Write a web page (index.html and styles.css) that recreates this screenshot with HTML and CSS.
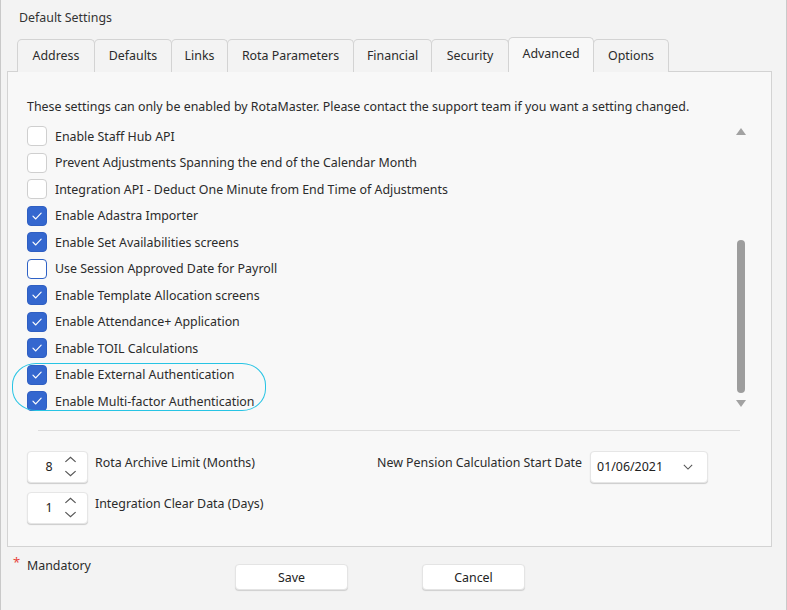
FILE: index.html
```html
<!DOCTYPE html>
<html>
<head>
<meta charset="utf-8">
<link rel="stylesheet" href="styles.css">
</head>
<body>
<div class="window">
  <div class="title">Default Settings</div>
  <div class="tabs">
    <div class="tab t-address">Address</div>
    <div class="tab t-defaults">Defaults</div>
    <div class="tab t-links">Links</div>
    <div class="tab t-rota">Rota Parameters</div>
    <div class="tab t-fin">Financial</div>
    <div class="tab t-sec">Security</div>
    <div class="tab active t-adv">Advanced</div>
    <div class="tab t-opt">Options</div>
  </div>
  <div class="panel">
    <div class="notice">These settings can only be enabled by RotaMaster. Please contact the support team if you want a setting changed.</div>
    <div class="list">
      <div class="items">
        <div class="row"><span class="cb"></span><span>Enable Staff Hub API</span></div>
        <div class="row"><span class="cb"></span><span>Prevent Adjustments Spanning the end of the Calendar Month</span></div>
        <div class="row"><span class="cb"></span><span>Integration API - Deduct One Minute from End Time of Adjustments</span></div>
        <div class="row"><span class="cb on"><svg viewBox="0 0 20 20"><path d="M5.5 10.2 L8.6 13.3 L14.6 6.8"/></svg></span><span>Enable Adastra Importer</span></div>
        <div class="row"><span class="cb on"><svg viewBox="0 0 20 20"><path d="M5.5 10.2 L8.6 13.3 L14.6 6.8"/></svg></span><span>Enable Set Availabilities screens</span></div>
        <div class="row"><span class="cb focus"></span><span>Use Session Approved Date for Payroll</span></div>
        <div class="row"><span class="cb on"><svg viewBox="0 0 20 20"><path d="M5.5 10.2 L8.6 13.3 L14.6 6.8"/></svg></span><span>Enable Template Allocation screens</span></div>
        <div class="row"><span class="cb on"><svg viewBox="0 0 20 20"><path d="M5.5 10.2 L8.6 13.3 L14.6 6.8"/></svg></span><span>Enable Attendance+ Application</span></div>
        <div class="row"><span class="cb on"><svg viewBox="0 0 20 20"><path d="M5.5 10.2 L8.6 13.3 L14.6 6.8"/></svg></span><span>Enable TOIL Calculations</span></div>
        <div class="row"><span class="cb on"><svg viewBox="0 0 20 20"><path d="M5.5 10.2 L8.6 13.3 L14.6 6.8"/></svg></span><span>Enable External Authentication</span></div>
        <div class="row"><span class="cb on"><svg viewBox="0 0 20 20"><path d="M5.5 10.2 L8.6 13.3 L14.6 6.8"/></svg></span><span>Enable Multi-factor Authentication</span></div>
      </div>
      <div class="scrollbar">
        <span class="arrow-up"></span>
        <span class="thumb"></span>
        <span class="arrow-down"></span>
      </div>
    </div>
    <div class="highlight"></div>
    <div class="sep"></div>
    <div class="bottom">
      <div class="left-col">
        <div class="spin-row">
          <div class="spin"><span class="val">8</span><svg class="chev" viewBox="0 0 14 22"><path d="M1.5 6 L7 1 L12.5 6"/><path d="M1.5 16 L7 21 L12.5 16"/></svg></div>
          <span class="spin-label">Rota Archive Limit (Months)</span>
        </div>
        <div class="spin-row">
          <div class="spin"><span class="val">1</span><svg class="chev" viewBox="0 0 14 22"><path d="M1.5 6 L7 1 L12.5 6"/><path d="M1.5 16 L7 21 L12.5 16"/></svg></div>
          <span class="spin-label">Integration Clear Data (Days)</span>
        </div>
      </div>
      <div class="right-col">
        <span class="spin-label">New Pension Calculation Start Date</span>
        <div class="combo"><span>01/06/2021</span><svg class="dchev" viewBox="0 0 12 7"><path d="M1 1 L6 6 L11 1"/></svg></div>
      </div>
    </div>
  </div>
  <div class="footer">
    <div class="mandatory"><span class="star">*</span><span class="mand-text">Mandatory</span></div>
    <button class="btn btn-save">Save</button>
    <button class="btn btn-cancel">Cancel</button>
  </div>
</div>
</body>
</html>
```

FILE: styles.css
```css
html, body {
  margin: 0;
  padding: 0;
  background: #f3f3f3;
}
body {
  font-family: "Noto Sans", "Open Sans", sans-serif;
  font-size: 12.4px;
  color: #2b2b2b;
}
.window {
  width: 787px;
  height: 610px;
  box-sizing: border-box;
  border-left: 1px solid #c9c9c9;
  border-right: 1px solid #c9c9c9;
  overflow: hidden;
}
.title {
  padding: 9px 0 0 18px;
  line-height: 17px;
  height: 17px;
  color: #333;
}
.tabs {
  display: flex;
  align-items: flex-end;
  height: 35px;
  margin: 11px 0 -1px 16px;
  position: relative;
  z-index: 2;
}
.tab {
  height: 33px;
  box-sizing: border-box;
  border: 1px solid #d3d3d3;
  border-bottom: none;
  border-radius: 5px 5px 0 0;
  margin-right: -1px;
  background: #f3f3f3;
  display: flex;
  align-items: center;
  justify-content: center;
  padding-bottom: 2px;
  color: #2b2b2b;
}
.tab.active {
  height: 35px;
  background: #f8f8f8;
  padding-bottom: 4px;
}
.t-address { width: 78px; }
.t-defaults { width: 78px; }
.t-links { width: 57px; }
.t-rota { width: 127px; }
.t-fin { width: 79px; }
.t-sec { width: 78px; }
.t-adv { width: 86px; }
.t-opt { width: 76px; }

.panel {
  position: relative;
  margin-left: 6px;
  width: 765px;
  height: 476px;
  box-sizing: border-box;
  border: 1px solid #d3d3d3;
  background: #f8f8f8;
  padding-left: 19px;
}
.notice {
  margin-top: 27px;
  line-height: 16px;
  white-space: nowrap;
}
.list {
  margin-top: 8px;
  display: flex;
  height: 291.5px;
}
.items {
  width: 709px;
}
.row {
  height: 26.5px;
  display: flex;
  align-items: center;
  gap: 8px;
  white-space: nowrap;
}
.cb {
  width: 20px;
  height: 20px;
  box-sizing: border-box;
  border: 1px solid #cfcfcf;
  border-radius: 4px;
  background: #fff;
  flex: none;
  display: block;
}
.cb.focus {
  border: 1.5px solid #2f62c6;
}
.cb.on {
  background: #3467cf;
  border-color: #2f5fc2;
}
.cb svg {
  width: 18px;
  height: 18px;
  display: block;
  fill: none;
  stroke: #fff;
  stroke-width: 1.3;
  stroke-linecap: round;
  stroke-linejoin: round;
}
.scrollbar {
  width: 10px;
  display: flex;
  flex-direction: column;
  align-items: center;
}
.arrow-up {
  margin-top: 5px;
  width: 0;
  height: 0;
  border-left: 5px solid transparent;
  border-right: 5px solid transparent;
  border-bottom: 7px solid #a2a2a2;
}
.thumb {
  margin-top: 105px;
  width: 8px;
  height: 153px;
  border-radius: 4px;
  background: #9d9d9d;
}
.arrow-down {
  margin-top: 7px;
  width: 0;
  height: 0;
  border-left: 5px solid transparent;
  border-right: 5px solid transparent;
  border-top: 7px solid #a2a2a2;
}
.highlight {
  position: absolute;
  left: 4px;
  top: 291px;
  width: 254px;
  height: 48px;
  box-sizing: border-box;
  border: 1.5px solid #27c4e4;
  border-radius: 24px / 22px;
  pointer-events: none;
}
.sep {
  margin: 15px 0 0 11px;
  width: 702px;
  height: 1px;
  background: #dedede;
}
.bottom {
  margin-top: 20px;
  display: flex;
}
.left-col {
  width: 350px;
  display: flex;
  flex-direction: column;
  gap: 9px;
}
.spin-row {
  display: flex;
  align-items: flex-start;
  gap: 7px;
}
.spin {
  width: 61px;
  height: 32px;
  box-sizing: border-box;
  background: #fff;
  border-radius: 4px;
  border: 1px solid #e6e6e6;
  box-shadow: 0 1px 1px rgba(0,0,0,0.18);
  display: flex;
  align-items: center;
  padding-left: 16px;
}
.val {
  width: 10px;
  text-align: center;
  color: #222;
}
.chev {
  margin-left: 10px;
  width: 13px;
  height: 21px;
  fill: none;
  stroke: #555;
  stroke-width: 1.3;
}
.spin-label {
  padding-top: 4px;
  line-height: 16px;
  white-space: nowrap;
}
.right-col {
  display: flex;
  align-items: flex-start;
  gap: 8px;
}
.combo {
  width: 118px;
  height: 32px;
  box-sizing: border-box;
  background: #fff;
  border-radius: 4px;
  border: 1px solid #e6e6e6;
  box-shadow: 0 1px 1px rgba(0,0,0,0.18);
  display: flex;
  align-items: center;
  padding-left: 6px;
  color: #222;
}
.dchev {
  margin-left: 20px;
  width: 10px;
  height: 6px;
  fill: none;
  stroke: #555;
  stroke-width: 1.3;
}
.footer {
  display: flex;
  align-items: flex-start;
  padding-top: 9px;
}
.mandatory {
  width: 234px;
  padding-left: 12px;
  box-sizing: border-box;
  display: flex;
  line-height: 16px;
}
.star {
  color: #e8453c;
  width: 14px;
  font-size: 13px;
  line-height: 12px;
}
.mand-text {
  padding-top: 2px;
}
.btn {
  margin-top: 8px;
  height: 26px;
  box-sizing: border-box;
  background: #fff;
  border: 1px solid #e4e4e4;
  border-radius: 4px;
  box-shadow: 0 1px 1px rgba(0,0,0,0.15);
  font-family: inherit;
  font-size: 12.4px;
  color: #222;
  padding: 0;
}
.btn-save { width: 113px; }
.btn-cancel { width: 103px; margin-left: 74px; }
```
